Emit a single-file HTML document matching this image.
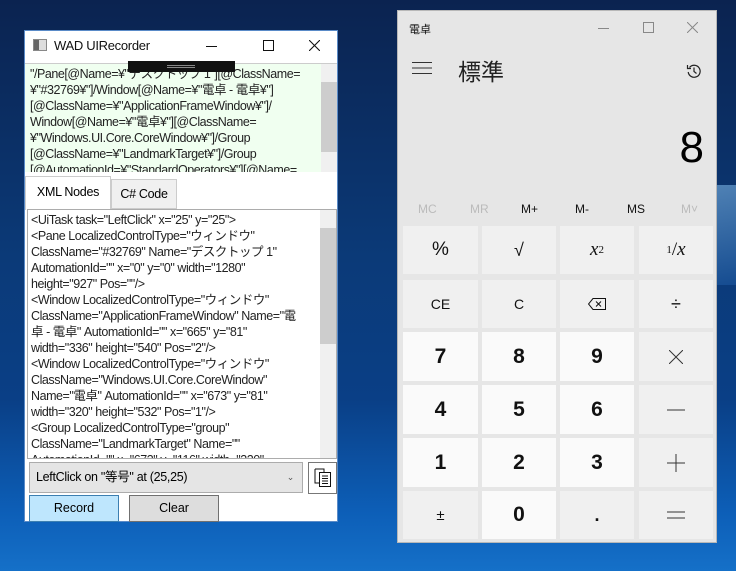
<!DOCTYPE html>
<html><head><meta charset="utf-8"><style>
*{margin:0;padding:0;box-sizing:border-box}
body{width:736px;height:571px;overflow:hidden;position:relative;font-family:"Liberation Sans","Noto Sans CJK JP",sans-serif;
background:linear-gradient(180deg,#0b2350 0%,#0b3a78 45%,#0a3f86 70%,#0d5fb8 90%,#1570c8 100%);}
.a{position:absolute}
.rec{left:24px;top:30px;width:314px;height:492px;background:#fff;border:1px solid #5a8bc8}
.t{font-size:12.5px;line-height:16px;color:#222;white-space:nowrap;letter-spacing:-0.45px}
.calc{left:397px;top:10px;width:320px;height:533px;background:#e6e6e6;border:1px solid #b8b8b8}
.b{position:absolute;display:flex;align-items:center;justify-content:center;color:#111}
.op{background:#f0f0f0;font-size:15px}
.dg{background:#fafafa;font-size:21px;font-weight:bold}
.m{position:absolute;top:191px;font-size:12px;color:#111}
</style></head><body>
<div class="a" style="left:700px;top:185px;width:40px;height:100px;background:linear-gradient(170deg,rgba(150,210,255,.5),rgba(60,140,230,.2))"></div>

<div class="a rec">
 <div class="a" style="left:8px;top:8px;width:14px;height:12px;border:1px solid #888;background:linear-gradient(90deg,#666 0 5px,#ddd 5px)"></div>
 <div class="a" style="left:29px;top:7px;font-size:13px;color:#111;letter-spacing:-0.3px">WAD UIRecorder</div>
 <div class="a" style="left:181px;top:15px;width:11px;height:1px;background:#111"></div>
 <div class="a" style="left:238px;top:9px;width:11px;height:11px;border:1px solid #111"></div>
 <svg class="a" style="left:284px;top:9px" width="11" height="11"><path d="M0 0L11 11M11 0L0 11" stroke="#111" stroke-width="1.1"/></svg>
 <div class="a" style="left:0;top:32px;width:312px;height:109px;background:#f0fff0;border-top:1px solid #ccc;overflow:hidden">
  <div class="t a" style="left:5px;top:2px">"/Pane[@Name=¥"デスクトップ 1"][@ClassName=<br>¥"#32769¥"]/Window[@Name=¥"電卓 - 電卓¥"]<br>[@ClassName=¥"ApplicationFrameWindow¥"]/<br>Window[@Name=¥"電卓¥"][@ClassName=<br>¥"Windows.UI.Core.CoreWindow¥"]/Group<br>[@ClassName=¥"LandmarkTarget¥"]/Group<br>[@AutomationId=¥"StandardOperators¥"][@Name=</div>
  <div class="a" style="left:296px;top:0;width:16px;height:109px;background:#f0f0f0"></div>
  <div class="a" style="left:296px;top:18px;width:16px;height:70px;background:#cdcdcd"></div>
 </div>
 <div class="a" style="left:103px;top:30px;width:107px;height:11px;background:#111"></div>
 <div class="a" style="left:142px;top:34px;width:28px;height:3px;border-top:1px solid #888;border-bottom:1px solid #888"></div>
 <div class="a" style="left:0;top:145px;width:86px;height:34px;border:1px solid #ccc;border-bottom:none;background:#fff;font-size:12.5px;text-align:center;line-height:30px;letter-spacing:-0.3px">XML Nodes</div>
 <div class="a" style="left:86px;top:148px;width:66px;height:30px;border:1px solid #ccc;background:#f0f0f0;font-size:12.5px;text-align:center;line-height:28px;letter-spacing:-0.3px">C# Code</div>
 <div class="a" style="left:2px;top:178px;width:310px;height:250px;border:1px solid #acacac;overflow:hidden;background:#fff">
  <div class="t a" style="left:3px;top:2px">&lt;UiTask task="LeftClick" x="25" y="25"&gt;<br>&lt;Pane LocalizedControlType="ウィンドウ"<br>ClassName="#32769" Name="デスクトップ 1"<br>AutomationId="" x="0" y="0" width="1280"<br>height="927" Pos=""/&gt;<br>&lt;Window LocalizedControlType="ウィンドウ"<br>ClassName="ApplicationFrameWindow" Name="電<br>卓 - 電卓" AutomationId="" x="665" y="81"<br>width="336" height="540" Pos="2"/&gt;<br>&lt;Window LocalizedControlType="ウィンドウ"<br>ClassName="Windows.UI.Core.CoreWindow"<br>Name="電卓" AutomationId="" x="673" y="81"<br>width="320" height="532" Pos="1"/&gt;<br>&lt;Group LocalizedControlType="group"<br>ClassName="LandmarkTarget" Name=""<br>AutomationId="" x="673" y="116" width="320"</div>
  <div class="a" style="left:292px;top:0;width:16px;height:248px;background:#f0f0f0"></div>
  <div class="a" style="left:292px;top:18px;width:16px;height:116px;background:#cdcdcd"></div>
 </div>
 <div class="a" style="left:4px;top:431px;width:274px;height:31px;background:#e5e5e5;border:1px solid #acacac;font-size:12.5px;line-height:29px;padding-left:6px;letter-spacing:-0.3px">LeftClick on "等号" at (25,25)<span style="position:absolute;right:8px;font-size:9px;color:#555">⌄</span></div>
 <div class="a" style="left:283px;top:431px;width:29px;height:32px;border:1px solid #777;background:#fff">
  <svg class="a" style="left:5px;top:5px" width="18" height="20"><path d="M1 1h9v3M1 1v14h4" fill="none" stroke="#111"/><rect x="5.5" y="4.5" width="11" height="14" fill="#fff" stroke="#111"/><path d="M8 8h6M8 10.5h6M8 13h6M8 15.5h6" stroke="#111"/></svg>
 </div>
 <div class="a" style="left:4px;top:464px;width:90px;height:27px;background:#bee6fd;border:1px solid #3c7fb1;font-size:12.5px;text-align:center;line-height:25px">Record</div>
 <div class="a" style="left:104px;top:464px;width:90px;height:27px;background:#ddd;border:1px solid #707070;font-size:12.5px;text-align:center;line-height:25px">Clear</div>
</div>

<div class="a calc">
 <div class="a" style="left:11px;top:10px;font-size:11px;color:#111">電卓</div>
 <div class="a" style="left:200px;top:17px;width:11px;height:1px;background:#888"></div>
 <div class="a" style="left:245px;top:11px;width:11px;height:11px;border:1px solid #888"></div>
 <svg class="a" style="left:289px;top:11px" width="11" height="11"><path d="M0 0L11 11M11 0L0 11" stroke="#888" stroke-width="1"/></svg>
 <svg class="a" style="left:14px;top:51px" width="20" height="12"><path d="M0 .5h20M0 6h20M0 11.5h20" stroke="#333" stroke-width="1"/></svg>
 <div class="a" style="left:60px;top:42px;font-size:23px;color:#222">標準</div>
 <svg class="a" style="left:288px;top:52px" width="16" height="16"><path d="M3.5 4.5A6 6 0 1 1 2.2 9" fill="none" stroke="#222" stroke-width="1.2"/><path d="M1.5 2v3.5h3.5" fill="none" stroke="#222" stroke-width="1.2"/><path d="M8 4.5v4l2.5 2" fill="none" stroke="#222" stroke-width="1.2"/></svg>
 <div class="a" style="right:12px;top:112px;font-size:44px;color:#000">8</div>
 <div class="m" style="left:20px;color:#bbb">MC</div>
 <div class="m" style="left:72px;color:#bbb">MR</div>
 <div class="m" style="left:123px">M+</div>
 <div class="m" style="left:177px">M-</div>
 <div class="m" style="left:229px">MS</div>
 <div class="m" style="left:283px;color:#bbb">M˅</div>

 <div class="b op" style="left:5px;top:215px;width:75px;height:48px;font-size:19px">%</div>
 <div class="b op" style="left:84px;top:215px;width:74px;height:48px;font-size:18px">√</div>
 <div class="b op" style="left:162px;top:215px;width:74px;height:48px;font-family:'Liberation Serif',serif;font-style:italic;font-size:19px">x<sup style="font-size:11px;font-style:normal">2</sup></div>
 <div class="b op" style="left:241px;top:215px;width:74px;height:48px;font-family:'Liberation Serif',serif;font-size:19px"><sup style="font-size:11px">1</sup>/<i>x</i></div>

 <div class="b op" style="left:5px;top:269px;width:75px;height:48px;font-size:14px">CE</div>
 <div class="b op" style="left:84px;top:269px;width:74px;height:48px;font-size:14px">C</div>
 <div class="b op" style="left:162px;top:269px;width:74px;height:48px"><svg width="18" height="12"><path d="M5 .5h12.5v11H5L.5 6z" fill="none" stroke="#111"/><path d="M8 3.5l5 5M13 3.5l-5 5" stroke="#111"/></svg></div>
 <div class="b op" style="left:241px;top:269px;width:74px;height:48px;font-size:18px;font-weight:200">÷</div>

 <div class="b dg" style="left:5px;top:321px;width:75px;height:49px">7</div>
 <div class="b dg" style="left:84px;top:321px;width:74px;height:49px">8</div>
 <div class="b dg" style="left:162px;top:321px;width:74px;height:49px">9</div>
 <div class="b op" style="left:241px;top:321px;width:74px;height:49px"><svg width="14" height="14"><path d="M0 0L14 14M14 0L0 14" stroke="#333"/></svg></div>

 <div class="b dg" style="left:5px;top:374px;width:75px;height:49px">4</div>
 <div class="b dg" style="left:84px;top:374px;width:74px;height:49px">5</div>
 <div class="b dg" style="left:162px;top:374px;width:74px;height:49px">6</div>
 <div class="b op" style="left:241px;top:374px;width:74px;height:49px"><svg width="18" height="2"><path d="M0 1h18" stroke="#333"/></svg></div>

 <div class="b dg" style="left:5px;top:427px;width:75px;height:49px">1</div>
 <div class="b dg" style="left:84px;top:427px;width:74px;height:49px">2</div>
 <div class="b dg" style="left:162px;top:427px;width:74px;height:49px">3</div>
 <div class="b op" style="left:241px;top:427px;width:74px;height:49px"><svg width="18" height="18"><path d="M0 9h18M9 0v18" stroke="#333"/></svg></div>

 <div class="b op" style="left:5px;top:480px;width:75px;height:48px;font-size:15px">±</div>
 <div class="b dg" style="left:84px;top:480px;width:74px;height:48px">0</div>
 <div class="b op" style="left:162px;top:480px;width:74px;height:48px;font-size:18px;font-weight:bold">.</div>
 <div class="b op" style="left:241px;top:480px;width:74px;height:48px"><svg width="18" height="8"><path d="M0 1h18M0 7h18" stroke="#333"/></svg></div>
</div>
</body></html>
